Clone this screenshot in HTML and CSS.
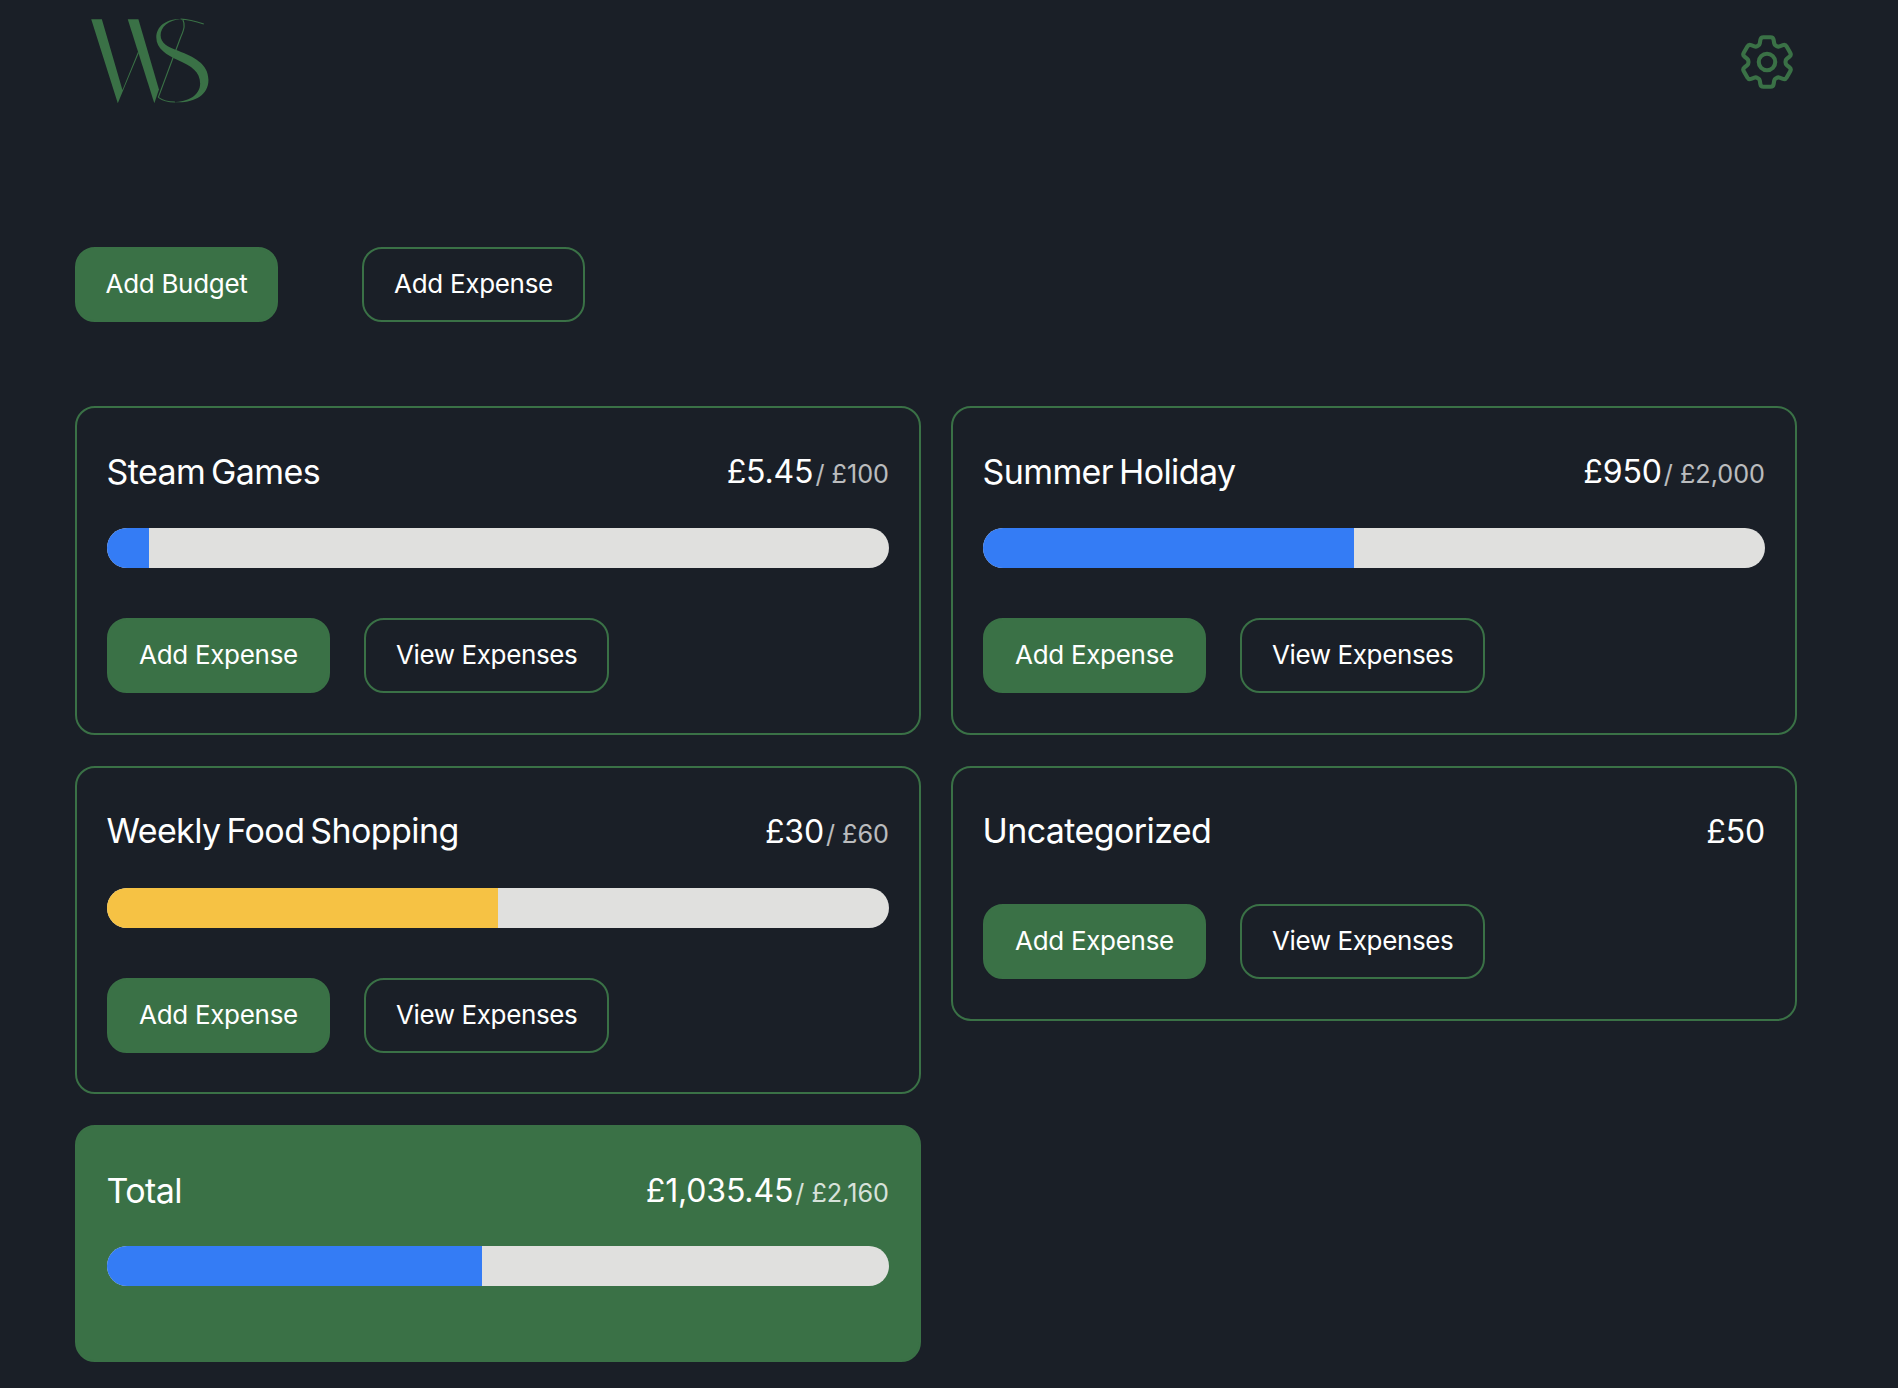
FILE: index.html
```html
<!DOCTYPE html>
<html lang="en">

<head>
    <meta charset="UTF-8">
    <meta name="viewport" content="width=device-width, initial-scale=1.0">
    <link rel="stylesheet" href="styles.css">
    <title>Budgets</title>
</head>

<body>
    <header class="top">
        <svg class="logo" viewBox="90 50 360 265" aria-label="WS logo">
            <path d="M93 57H125L187 270L234 155L236.500 158L173 310Z" />
            <path d="M203 57H235L297 268L283 310Z" />
            <path d="M362 56C318 56 289 78 289 112C289 145 320 165 355 180C395 197 421 215 421 250C421 285 385 306 340 306C395 312 446 290 446 240C446 190 400 170 355 152C322 140 302 128 302 105C302 80 325 60 362 56Z" />
            <path class="thin" d="M432 71C405 62 385 57 362 56M295 292C310 303 325 306 345 306M295 292L362 112C374 85 376 72 369 58" />
        </svg>
        <svg class="gear" viewBox="0 0 24 24" aria-label="Settings">
            <path d="M9.594 3.94c.09-.542.56-.94 1.11-.94h2.593c.55 0 1.02.398 1.11.94l.213 1.281c.063.374.313.686.645.87.074.04.147.083.22.127.325.196.72.257 1.075.124l1.217-.456a1.125 1.125 0 0 1 1.37.49l1.296 2.247a1.125 1.125 0 0 1-.26 1.431l-1.003.827c-.293.241-.438.613-.43.992a7.723 7.723 0 0 1 0 .255c-.008.378.137.75.43.991l1.004.827c.424.35.534.955.26 1.43l-1.298 2.247a1.125 1.125 0 0 1-1.369.491l-1.217-.456c-.355-.133-.75-.072-1.076.124a6.47 6.47 0 0 1-.22.128c-.331.183-.581.495-.644.869l-.213 1.281c-.09.543-.56.94-1.11.94h-2.594c-.55 0-1.019-.398-1.11-.94l-.213-1.281c-.062-.374-.312-.686-.644-.87a6.52 6.52 0 0 1-.22-.127c-.325-.196-.72-.257-1.076-.124l-1.217.456a1.125 1.125 0 0 1-1.369-.49l-1.297-2.247a1.125 1.125 0 0 1 .26-1.431l1.004-.827c.292-.24.437-.613.43-.991a6.932 6.932 0 0 1 0-.255c.007-.38-.138-.751-.43-.992l-1.004-.827a1.125 1.125 0 0 1-.26-1.43l1.297-2.247a1.125 1.125 0 0 1 1.37-.491l1.216.456c.356.133.751.072 1.076-.124.072-.044.146-.086.22-.128.332-.183.582-.495.644-.869l.214-1.28Z" />
            <path d="M15 12a3 3 0 1 1-6 0 3 3 0 0 1 6 0Z" />
        </svg>
    </header>

    <main class="page">
        <div class="actions top-actions">
            <button class="btn solid">Add Budget</button>
            <button class="btn outline">Add Expense</button>
        </div>

        <div class="cards">
            <section class="card">
                <div class="card-head">
                    <h2>Steam Games</h2>
                    <div class="amount">£5.45<span class="max">/ £100</span></div>
                </div>
                <div class="bar"><div class="fill blue" style="width: 5.45%"></div></div>
                <div class="actions">
                    <button class="btn solid">Add Expense</button>
                    <button class="btn outline">View Expenses</button>
                </div>
            </section>

            <section class="card">
                <div class="card-head">
                    <h2>Summer Holiday</h2>
                    <div class="amount">£950<span class="max">/ £2,000</span></div>
                </div>
                <div class="bar"><div class="fill blue" style="width: 47.5%"></div></div>
                <div class="actions">
                    <button class="btn solid">Add Expense</button>
                    <button class="btn outline">View Expenses</button>
                </div>
            </section>

            <section class="card">
                <div class="card-head">
                    <h2>Weekly Food Shopping</h2>
                    <div class="amount">£30<span class="max">/ £60</span></div>
                </div>
                <div class="bar"><div class="fill yellow" style="width: 50%"></div></div>
                <div class="actions">
                    <button class="btn solid">Add Expense</button>
                    <button class="btn outline">View Expenses</button>
                </div>
            </section>

            <section class="card no-bar">
                <div class="card-head">
                    <h2>Uncategorized</h2>
                    <div class="amount">£50</div>
                </div>
                <div class="actions">
                    <button class="btn solid">Add Expense</button>
                    <button class="btn outline">View Expenses</button>
                </div>
            </section>

            <section class="card total">
                <div class="card-head">
                    <h2>Total</h2>
                    <div class="amount">£1,035.45<span class="max">/ £2,160</span></div>
                </div>
                <div class="bar"><div class="fill blue" style="width: 47.94%"></div></div>
            </section>
        </div>
    </main>
</body>

</html>
```

FILE: styles.css
```css
* {
    margin: 0;
    padding: 0;
    box-sizing: border-box;
}

body {
    background: #1a1f27;
    color: #fff;
    font-family: Inter, "Liberation Sans", sans-serif;
}

.top {
    display: flex;
    justify-content: space-between;
    align-items: flex-start;
    height: 247px;
    padding: 17px 98px 0 90px;
}

.logo {
    width: 120px;
    height: 88px;
}

.logo path {
    fill: #3a7146;
}

.logo .thin {
    fill: none;
    stroke: #3a7146;
    stroke-width: 3.5;
}

.gear {
    width: 66px;
    height: 66px;
    margin-top: 12px;
    fill: none;
    stroke: #3a7146;
    stroke-width: 1.5;
}

.page {
    padding: 0 101px 26px 75px;
}

.actions {
    display: flex;
    gap: 33.500px;
}

.top-actions {
    gap: 84px;
    margin-bottom: 84px;
}

.btn {
    height: 75px;
    padding: 0 30.500px 2px;
    border: 2px solid #3a7146;
    border-radius: 20px;
    background: transparent;
    color: #fff;
    font-family: inherit;
    font-size: 26px;
    letter-spacing: -0.3px;
}

.btn.solid {
    background: #3a7146;
}

.top-actions .btn.solid {
    padding: 0 28.500px 2px;
}

.top-actions .btn.outline {
    padding: 0 30px 2px;
}

.card .btn.outline {
    padding: 0 30px 2px;
    letter-spacing: -0.38px;
}

.cards {
    display: grid;
    grid-template-columns: 1fr 1fr;
    gap: 31px 30px;
    align-items: start;
}

.card {
    padding: 30px 30px 39.500px 29.500px;
    border: 2px solid #3a7146;
    border-radius: 20px;
}

.card-head {
    display: flex;
    justify-content: space-between;
    align-items: center;
    height: 68px;
    margin-bottom: 22px;
    padding-bottom: 1.500px;
}

.no-bar .card-head {
    margin-bottom: 38.500px;
}

h2 {
    font-size: 34px;
    font-weight: 400;
    letter-spacing: -0.6px;
    word-spacing: -3px;
}

.amount {
    margin-top: 1px;
    font-size: 32px;
    letter-spacing: -0.15px;
}

.max {
    margin-left: 2px;
    font-size: 25.200px;
    letter-spacing: 0;
    opacity: 0.7;
}

.bar {
    height: 40px;
    margin-bottom: 50px;
    border-radius: 20px;
    background: #e0e0de;
    overflow: hidden;
}

.fill {
    height: 100%;
}

.blue {
    background: #347cf5;
}

.yellow {
    background: #f6c244;
}

.total {
    background: #3a7146;
}

.total .card-head {
    margin-bottom: 21px;
}

.total .bar {
    margin-bottom: 34.500px;
}

.total .max {
    opacity: 0.8;
}
```
